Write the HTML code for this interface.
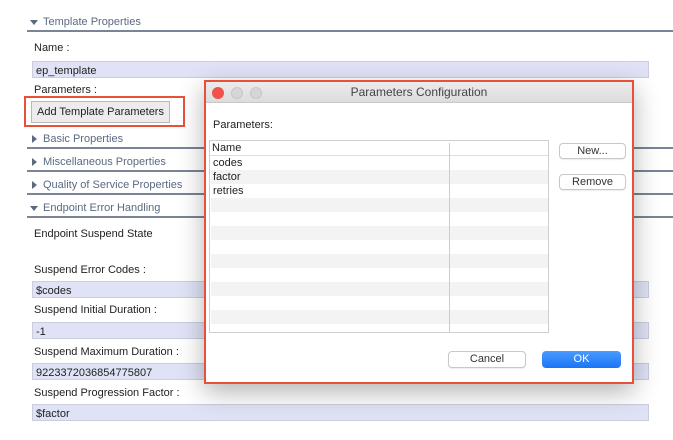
<!DOCTYPE html>
<html><head><style>
*{margin:0;padding:0;box-sizing:border-box}
body{width:673px;height:440px;background:#fff;font-family:"Liberation Sans",sans-serif;font-size:11px;color:#222;position:relative;overflow:hidden}
.a{position:absolute}
.sec{position:absolute;left:27px;width:646px;height:20px;border-bottom:2px solid #7a8496;color:#5a6a82;font-size:11px}
.sec span{position:absolute;left:16px;top:4px}
.tri{position:absolute;left:3px;top:8px;width:0;height:0}
.down{border-left:4px solid transparent;border-right:4px solid transparent;border-top:5px solid #5a6a82}
.right{left:5px;top:6px;border-top:4px solid transparent;border-bottom:4px solid transparent;border-left:5px solid #5a6a82}
.inp{position:absolute;left:32px;width:617px;height:17px;background:#dfe3f5;border:1px solid #c9cddd;padding-left:3px;line-height:16px;padding-top:1px}
.lbl{position:absolute;left:34px}
.row{position:absolute;left:1px;width:338px;height:14px;padding-left:2px;line-height:14px}
.btn{position:absolute;background:#fff;border:1px solid #c8c8c8;border-radius:4px;text-align:center;line-height:14px;color:#333;box-shadow:0 1px 1px rgba(0,0,0,.08)}
</style></head><body>
<div class="sec" style="top:12px"><div class="tri down"></div><span>Template Properties</span></div>
<div class="lbl" style="top:42px">Name :</div>
<div class="inp" style="top:61px">ep_template</div>
<div class="lbl" style="top:84px">Parameters :</div>
<div class="a" style="left:24px;top:96px;width:161px;height:31px;border:2px solid #e8503c"></div>
<div class="a" style="left:31px;top:101px;width:139px;height:22px;background:#ececec;border:1px solid #bbb;line-height:20px;padding-left:5px">Add Template Parameters</div>
<div class="sec" style="top:129px"><div class="tri right"></div><span>Basic Properties</span></div>
<div class="sec" style="top:152px"><div class="tri right"></div><span>Miscellaneous Properties</span></div>
<div class="sec" style="top:175px"><div class="tri right"></div><span>Quality of Service Properties</span></div>
<div class="sec" style="top:198px"><div class="tri down"></div><span>Endpoint Error Handling</span></div>
<div class="lbl" style="top:228px">Endpoint Suspend State</div>
<div class="lbl" style="top:264px">Suspend Error Codes :</div>
<div class="inp" style="top:281px">$codes</div>
<div class="lbl" style="top:304px">Suspend Initial Duration :</div>
<div class="inp" style="top:322px">-1</div>
<div class="lbl" style="top:346px">Suspend Maximum Duration :</div>
<div class="inp" style="top:363px">9223372036854775807</div>
<div class="lbl" style="top:387px">Suspend Progression Factor :</div>
<div class="inp" style="top:404px">$factor</div>

<div class="a" style="left:204px;top:80px;width:430px;height:304px;background:#fff;border:2px solid #e8503c;box-shadow:0 8px 24px rgba(0,0,0,.3)">
 <div class="a" style="left:0;top:0;width:426px;height:21px;background:linear-gradient(#ececec,#dcdcdc);border-bottom:1px solid #c8c8c8;text-align:center;line-height:21px;font-size:12px;color:#444">Parameters Configuration</div>
 <div class="a" style="left:6px;top:5px;width:12px;height:12px;border-radius:6px;background:#f0524a"></div>
 <div class="a" style="left:25px;top:5px;width:12px;height:12px;border-radius:6px;background:#d6d6d6;border:1px solid #c6c6c6"></div>
 <div class="a" style="left:44px;top:5px;width:12px;height:12px;border-radius:6px;background:#d6d6d6;border:1px solid #c6c6c6"></div>
 <div class="a" style="left:7px;top:37px">Parameters:</div>
 <div class="a" style="left:3px;top:58px;width:340px;height:193px;border:1px solid #cfcfcf;overflow:hidden">
  <div class="row" style="top:0;height:15px;border-bottom:1px solid #ddd;width:338px;left:0">Name</div>
  <div class="row" style="top:15px">codes</div>
  <div class="row" style="top:29px;background:#f3f3f3">factor</div>
  <div class="row" style="top:43px">retries</div>
  <div class="row" style="top:57px;background:#f3f3f3"></div>
  <div class="row" style="top:85px;background:#f3f3f3"></div>
  <div class="row" style="top:113px;background:#f3f3f3"></div>
  <div class="row" style="top:141px;background:#f3f3f3"></div>
  <div class="row" style="top:169px;background:#f3f3f3"></div>
  <div class="a" style="left:239px;top:2px;width:1px;height:190px;background:#ccc"></div>
 </div>
 <div class="btn" style="left:353px;top:61px;width:67px;height:16px">New...</div>
 <div class="btn" style="left:353px;top:92px;width:67px;height:16px">Remove</div>
 <div class="btn" style="left:242px;top:269px;width:78px;height:17px;line-height:15px">Cancel</div>
 <div class="a" style="left:336px;top:269px;width:79px;height:17px;border-radius:4px;background:linear-gradient(#4a9bff,#1b74f5);color:#fff;text-align:center;line-height:17px">OK</div>
</div>
</body></html>
